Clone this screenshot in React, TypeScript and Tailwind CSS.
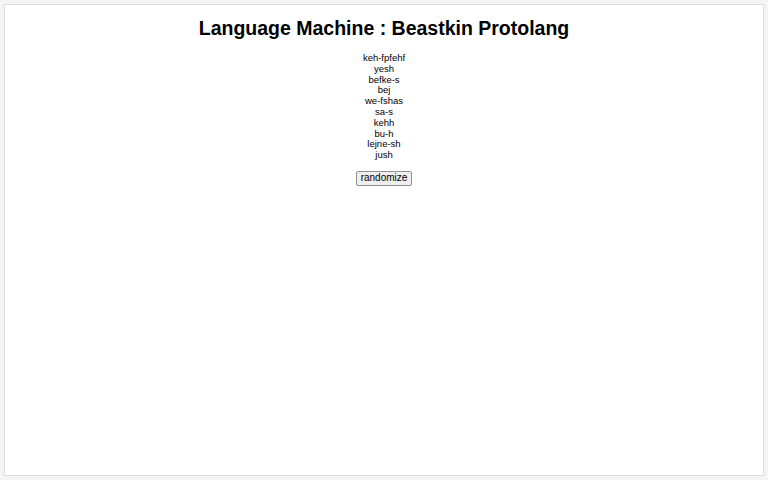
import React from "react";

const words = ["keh-fpfehf", "yesh", "befke-s", "bej", "we-fshas", "sa-s", "kehh", "bu-h", "lejne-sh", "jush"];

export default function App() {
  return (
    <div className="w-[768px] h-[480px] bg-[#f4f4f4] p-[4px] font-['Liberation_Sans',Arial,sans-serif] text-black">
      <div className="h-full bg-white border border-[#dcdcdc] flex flex-col items-center">
        <h1 className="mt-[12px] text-[19.5px] leading-[22px] font-bold">Language Machine : Beastkin Protolang</h1>
        <div className="mt-[14px] flex flex-col items-center text-[9.5px] leading-[10.8px]">
          {words.map((w) => (
            <div key={w}>{w}</div>
          ))}
        </div>
        <button className="mt-[10px] px-[4px] h-[15px] text-[10px] leading-[12px] bg-[#efefef] border border-[#8f8f8f] rounded-[2px]">
          randomize
        </button>
      </div>
    </div>
  );
}
